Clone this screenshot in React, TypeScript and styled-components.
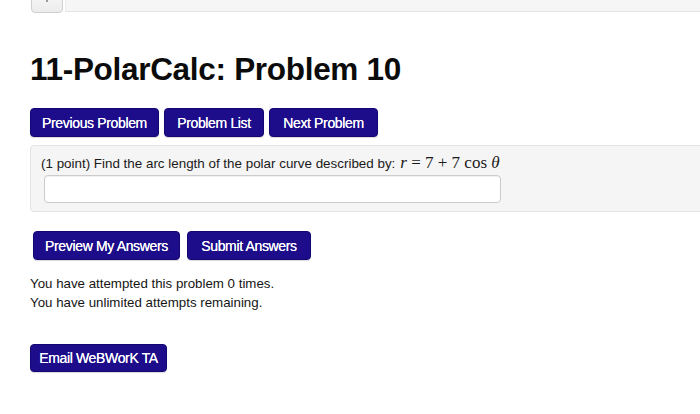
import React from 'react';
import styled, { createGlobalStyle } from 'styled-components';

const GlobalStyle = createGlobalStyle`
  html, body {
    margin: 0;
    padding: 0;
    background: #ffffff;
    overflow: hidden;
  }
  body {
    font-family: "Liberation Sans", Arial, Helvetica, sans-serif;
    color: #111;
  }
`;

const Page = styled.div`
  width: 700px;
  height: 414px;
  overflow: hidden;
`;

const TopStrip = styled.div`
  display: flex;
  align-items: flex-start;
  gap: 2px;
  margin-top: -20px;
  padding-left: 31px;
`;

const ToggleButton = styled.div`
  width: 32px;
  height: 33px;
  box-sizing: border-box;
  border: 1px solid #cfcfcf;
  border-radius: 0 0 4px 4px;
  background: linear-gradient(#ffffff, #ececec);
  display: flex;
  align-items: flex-end;
  justify-content: center;
  padding-bottom: 10px;
`;

const ToggleDot = styled.span`
  width: 2px;
  height: 4px;
  background: #9a9a9a;
`;

const NavBar = styled.div`
  flex: 1;
  height: 31px;
  background: #f6f6f6;
  border-bottom: 1px solid #e4e4e4;
  border-left: 1px solid #ececec;
`;

const Content = styled.div`
  padding-left: 30px;
`;

const Title = styled.h1`
  margin: 40px 0 22px;
  font-size: 31.5px;
  line-height: 33px;
  font-weight: bold;
  letter-spacing: -0.3px;
  color: #0b0b0b;
`;

const ButtonRow = styled.div<{ indent?: number }>`
  display: flex;
  gap: ${({ indent }) => (indent ? 7 : 5)}px;
  padding-left: ${({ indent }) => indent ?? 0}px;
`;

const NavButton = styled.button<{ w: number; h?: number }>`
  width: ${({ w }) => w}px;
  height: ${({ h }) => h ?? 29}px;
  box-sizing: border-box;
  padding: 0;
  background: #1d0d8b;
  border: 1px solid #150773;
  border-radius: 4px;
  color: #ffffff;
  font-family: "Liberation Sans", Arial, Helvetica, sans-serif;
  font-size: 14px;
  letter-spacing: -0.35px;
  text-shadow: 0 0 0.4px #ffffff;
  box-shadow: 0 1px 1px rgba(0, 0, 0, 0.15);
`;

const ProblemBox = styled.div`
  margin: 8px -10px 0 0;
  padding: 8px 10px 8px 10px;
  background: #f5f5f5;
  border: 1px solid #e3e3e3;
  border-radius: 4px;
`;

const ProblemText = styled.div`
  font-size: 13.4px;
  line-height: 18px;
  color: #1a1a1a;
`;

const Math = styled.span`
  font-family: "Liberation Serif", "Times New Roman", serif;
  font-size: 17px;
  margin-left: 5px;
`;

const MathVar = styled.i`
  font-style: italic;
`;

const AnswerInput = styled.input`
  display: block;
  margin: 2px 0 0 3px;
  width: 457px;
  height: 28px;
  box-sizing: border-box;
  border: 1px solid #cccccc;
  border-radius: 4px;
  background: #ffffff;
  box-shadow: inset 0 1px 1px rgba(0, 0, 0, 0.06);
`;

const SubmitArea = styled.div`
  margin-top: 19px;
`;

const Attempts = styled.div`
  margin-top: 14px;
  font-size: 13.3px;
  line-height: 19px;
  color: #151515;
`;

const EmailArea = styled.div`
  margin-top: 32px;
`;

export default function App() {
  return (
    <Page>
      <GlobalStyle />
      <TopStrip>
        <ToggleButton>
          <ToggleDot />
        </ToggleButton>
        <NavBar />
      </TopStrip>
      <Content>
        <Title>11-PolarCalc: Problem 10</Title>
        <ButtonRow>
          <NavButton w={129}>Previous Problem</NavButton>
          <NavButton w={100}>Problem List</NavButton>
          <NavButton w={109}>Next Problem</NavButton>
        </ButtonRow>
        <ProblemBox>
          <ProblemText>
            (1 point) Find the arc length of the polar curve described by:
            <Math>
              <MathVar>r</MathVar> = 7 + 7 cos <MathVar>θ</MathVar>
            </Math>
          </ProblemText>
          <AnswerInput />
        </ProblemBox>
        <SubmitArea>
          <ButtonRow indent={3}>
            <NavButton w={147}>Preview My Answers</NavButton>
            <NavButton w={124}>Submit Answers</NavButton>
          </ButtonRow>
        </SubmitArea>
        <Attempts>
          You have attempted this problem 0 times.
          <br />
          You have unlimited attempts remaining.
        </Attempts>
        <EmailArea>
          <NavButton w={137} h={28}>Email WeBWorK TA</NavButton>
        </EmailArea>
      </Content>
    </Page>
  );
}
